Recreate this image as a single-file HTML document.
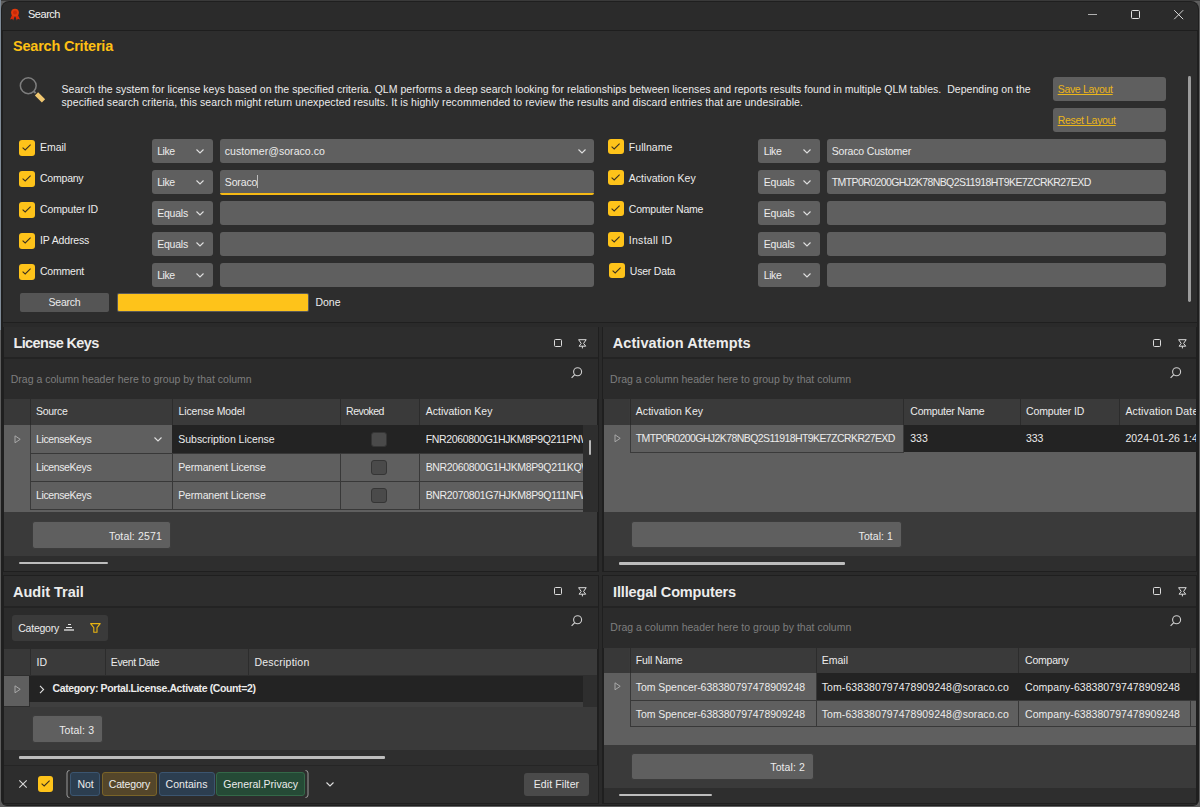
<!DOCTYPE html>
<html><head><meta charset="utf-8">
<style>
*{box-sizing:border-box;margin:0;padding:0}
html,body{width:1200px;height:807px;overflow:hidden;background:#5a5a5a}
body{font-family:"Liberation Sans",sans-serif;font-size:11px;color:#f0f0f0;position:relative}
.a{position:absolute}
.t{position:absolute;white-space:nowrap;line-height:1}
svg{position:absolute;overflow:visible}
</style></head><body>
<div class="a" style="left:0px;top:0px;width:1200px;height:807px;background:#5e5e5e;"></div>
<div class="a" style="left:0px;top:0px;width:1200px;height:1.2px;background:#3a3a3a;"></div>
<div class="a" style="left:0px;top:0px;width:1.2px;height:330px;background:#7f8b98;"></div>
<div class="a" style="left:1px;top:1px;width:1198px;height:805px;background:#1f1f1f;border-radius:8px 8px 6px 6px;"></div>
<div class="a" style="left:2px;top:2px;width:1196px;height:28px;background:#2b2b2b;border-radius:7px 7px 0 0;"></div>
<div class="a" style="left:2px;top:30px;width:1196px;height:1px;background:#1e1e1e;"></div>
<svg style="left:9px;top:8px" width="12" height="13" viewBox="0 0 12 13">
<path d="M3.2 6.5 L1 11.5 L3.3 10.8 L4.2 12.6 L6 7.5 Z" fill="#d82a0a"/>
<path d="M8.8 6.5 L11 11.5 L8.7 10.8 L7.8 12.6 L6 7.5 Z" fill="#d82a0a"/>
<circle cx="6" cy="4.6" r="3.9" fill="#e03a0c"/><circle cx="6" cy="4.6" r="2" fill="#c82808"/>
</svg>
<div class="t" style="top:8.69px;font-size:11px;color:#f2f2f2;letter-spacing:-0.476px;left:28px;">Search</div>
<div class="a" style="left:1088px;top:14px;width:9px;height:1.3px;background:#b0b0b0;"></div>
<div class="a" style="left:1131px;top:10px;width:9px;height:9px;border:1px solid #e0e0e0;border-radius:1.5px;"></div>
<svg style="left:1174px;top:10px" width="10" height="10" viewBox="0 0 10 10"><path d="M0.2 0.2 L9.2 9.2 M9.2 0.2 L0.2 9.2" stroke="#e0e0e0" stroke-width="0.95"/></svg>
<div class="a" style="left:3px;top:31px;width:1194px;height:291px;background:#2d2d2d;"></div>
<div class="t" style="top:38.73px;font-size:14.5px;color:#fec014;font-weight:bold;letter-spacing:-0.211px;left:13px;">Search Criteria</div>
<svg style="left:18px;top:76px" width="30" height="30" viewBox="0 0 30 30">
<circle cx="10.25" cy="9.75" r="7.9" fill="none" stroke="#7e7e7e" stroke-width="1.5"/>
<path d="M15.6 15.1 L17.6 17.1" stroke="#7e7e7e" stroke-width="2"/>
<path d="M20.1 16.2 L27.1 23.2 L23.9 26.4 L16.9 19.4 Z" fill="#f0c770"/>
</svg>
<div class="t" style="top:83.91px;font-size:10.5px;color:#ececec;letter-spacing:0.039px;left:61.5px;white-space:pre;">Search the system for license keys based on the specified criteria. QLM performs a deep search looking for relationships between licenses and reports results found in multiple QLM tables.  Depending on the</div>
<div class="t" style="top:96.81px;font-size:10.5px;color:#ececec;letter-spacing:0.097px;left:61.5px;">specified search criteria, this search might return unexpected results. It is highly recommended to review the results and discard entries that are undesirable.</div>
<div class="a" style="left:1053px;top:77px;width:113px;height:24px;background:#5f5f5f;border-radius:3px;"></div>
<div class="t" style="top:83.91px;font-size:10.5px;color:#eab51a;letter-spacing:-0.307px;left:1057.7px;text-decoration:underline;text-decoration-skip-ink:none;">Save Layout</div>
<div class="a" style="left:1053px;top:108px;width:113px;height:24px;background:#5f5f5f;border-radius:3px;"></div>
<div class="t" style="top:114.91px;font-size:10.5px;color:#eab51a;letter-spacing:-0.323px;left:1057.7px;text-decoration:underline;text-decoration-skip-ink:none;">Reset Layout</div>
<div class="a" style="left:1188px;top:75.5px;width:2.8px;height:226.5px;background:#9c9c9c;border-radius:1.4px;"></div>
<div class="a" style="left:19px;top:140px;width:15.5px;height:15.5px;background:#fec31a;border-radius:3px;"></div>
<svg style="left:19px;top:140px" width="16" height="16" viewBox="0 0 16 16"><path d="M3.6 7.6 L6.2 10 L11.6 4.6" fill="none" stroke="#3a3020" stroke-width="1.1"/></svg>
<div class="t" style="top:141.91px;font-size:10.5px;color:#ececec;letter-spacing:-0.051px;left:40px;">Email</div>
<div class="a" style="left:152px;top:139px;width:61px;height:24px;background:#5f5f5f;border-radius:3px;"></div>
<div class="t" style="top:146.11px;font-size:10.5px;color:#ececec;letter-spacing:-0.415px;left:157.2px;">Like</div>
<svg style="left:196px;top:149px" width="8" height="5" viewBox="0 0 8 5"><path d="M0.5 0.5 L4 4 L7.5 0.5" fill="none" stroke="#e0e0e0" stroke-width="1.1"/></svg>
<div class="a" style="left:219.5px;top:139px;width:374.8px;height:24px;background:#5f5f5f;border-radius:3px;"></div>
<div class="t" style="top:146.11px;font-size:10.5px;color:#ececec;letter-spacing:0.036px;left:224.8px;">customer@soraco.co</div>
<svg style="left:577.5px;top:149px" width="8" height="5" viewBox="0 0 8 5"><path d="M0.5 0.5 L4 4 L7.5 0.5" fill="none" stroke="#e0e0e0" stroke-width="1.1"/></svg>
<div class="a" style="left:19px;top:171px;width:15.5px;height:15.5px;background:#fec31a;border-radius:3px;"></div>
<svg style="left:19px;top:171px" width="16" height="16" viewBox="0 0 16 16"><path d="M3.6 7.6 L6.2 10 L11.6 4.6" fill="none" stroke="#3a3020" stroke-width="1.1"/></svg>
<div class="t" style="top:172.91px;font-size:10.5px;color:#ececec;letter-spacing:-0.220px;left:40px;">Company</div>
<div class="a" style="left:152px;top:170px;width:61px;height:24px;background:#5f5f5f;border-radius:3px;"></div>
<div class="t" style="top:177.11px;font-size:10.5px;color:#ececec;letter-spacing:-0.415px;left:157.2px;">Like</div>
<svg style="left:196px;top:180px" width="8" height="5" viewBox="0 0 8 5"><path d="M0.5 0.5 L4 4 L7.5 0.5" fill="none" stroke="#e0e0e0" stroke-width="1.1"/></svg>
<div class="a" style="left:219.5px;top:170px;width:374.8px;height:24px;background:#5f5f5f;border-radius:3px;"></div>
<div class="t" style="top:177.11px;font-size:10.5px;color:#ececec;letter-spacing:-0.145px;left:224.8px;">Soraco</div>
<div class="a" style="left:219.5px;top:192.8px;width:374.8px;height:2.2px;background:#f5b914;border-radius:0 0 2px 2px;"></div>
<div class="a" style="left:257.3px;top:175px;width:0.9px;height:12.8px;background:#bcbcbc;"></div>
<div class="a" style="left:19px;top:202px;width:15.5px;height:15.5px;background:#fec31a;border-radius:3px;"></div>
<svg style="left:19px;top:202px" width="16" height="16" viewBox="0 0 16 16"><path d="M3.6 7.6 L6.2 10 L11.6 4.6" fill="none" stroke="#3a3020" stroke-width="1.1"/></svg>
<div class="t" style="top:203.91px;font-size:10.5px;color:#ececec;letter-spacing:-0.138px;left:40px;">Computer ID</div>
<div class="a" style="left:152px;top:201px;width:61px;height:24px;background:#5f5f5f;border-radius:3px;"></div>
<div class="t" style="top:208.11px;font-size:10.5px;color:#ececec;letter-spacing:-0.217px;left:157.2px;">Equals</div>
<svg style="left:196px;top:211px" width="8" height="5" viewBox="0 0 8 5"><path d="M0.5 0.5 L4 4 L7.5 0.5" fill="none" stroke="#e0e0e0" stroke-width="1.1"/></svg>
<div class="a" style="left:219.5px;top:201px;width:374.8px;height:24px;background:#5f5f5f;border-radius:3px;"></div>
<div class="a" style="left:19px;top:233px;width:15.5px;height:15.5px;background:#fec31a;border-radius:3px;"></div>
<svg style="left:19px;top:233px" width="16" height="16" viewBox="0 0 16 16"><path d="M3.6 7.6 L6.2 10 L11.6 4.6" fill="none" stroke="#3a3020" stroke-width="1.1"/></svg>
<div class="t" style="top:234.91px;font-size:10.5px;color:#ececec;letter-spacing:-0.136px;left:40px;">IP Address</div>
<div class="a" style="left:152px;top:232px;width:61px;height:24px;background:#5f5f5f;border-radius:3px;"></div>
<div class="t" style="top:239.11px;font-size:10.5px;color:#ececec;letter-spacing:-0.217px;left:157.2px;">Equals</div>
<svg style="left:196px;top:242px" width="8" height="5" viewBox="0 0 8 5"><path d="M0.5 0.5 L4 4 L7.5 0.5" fill="none" stroke="#e0e0e0" stroke-width="1.1"/></svg>
<div class="a" style="left:219.5px;top:232px;width:374.8px;height:24px;background:#5f5f5f;border-radius:3px;"></div>
<div class="a" style="left:19px;top:264px;width:15.5px;height:15.5px;background:#fec31a;border-radius:3px;"></div>
<svg style="left:19px;top:264px" width="16" height="16" viewBox="0 0 16 16"><path d="M3.6 7.6 L6.2 10 L11.6 4.6" fill="none" stroke="#3a3020" stroke-width="1.1"/></svg>
<div class="t" style="top:265.91px;font-size:10.5px;color:#ececec;letter-spacing:-0.216px;left:40px;">Comment</div>
<div class="a" style="left:152px;top:263px;width:61px;height:24px;background:#5f5f5f;border-radius:3px;"></div>
<div class="t" style="top:270.11px;font-size:10.5px;color:#ececec;letter-spacing:-0.415px;left:157.2px;">Like</div>
<svg style="left:196px;top:273px" width="8" height="5" viewBox="0 0 8 5"><path d="M0.5 0.5 L4 4 L7.5 0.5" fill="none" stroke="#e0e0e0" stroke-width="1.1"/></svg>
<div class="a" style="left:219.5px;top:263px;width:374.8px;height:24px;background:#5f5f5f;border-radius:3px;"></div>
<div class="a" style="left:608px;top:138.8px;width:15.5px;height:15.5px;background:#fec31a;border-radius:3px;"></div>
<svg style="left:608px;top:138.8px" width="16" height="16" viewBox="0 0 16 16"><path d="M3.6 7.6 L6.2 10 L11.6 4.6" fill="none" stroke="#3a3020" stroke-width="1.1"/></svg>
<div class="t" style="top:141.61px;font-size:10.5px;color:#ececec;letter-spacing:0.071px;left:628.75px;">Fullname</div>
<div class="a" style="left:758px;top:139px;width:62px;height:24px;background:#5f5f5f;border-radius:3px;"></div>
<div class="t" style="top:146.11px;font-size:10.5px;color:#ececec;letter-spacing:-0.415px;left:763.75px;">Like</div>
<svg style="left:803px;top:149px" width="8" height="5" viewBox="0 0 8 5"><path d="M0.5 0.5 L4 4 L7.5 0.5" fill="none" stroke="#e0e0e0" stroke-width="1.1"/></svg>
<div class="a" style="left:827px;top:139px;width:339px;height:24px;background:#5f5f5f;border-radius:3px;"></div>
<div class="t" style="top:146.11px;font-size:10.5px;color:#ececec;letter-spacing:-0.160px;left:831.7px;">Soraco Customer</div>
<div class="a" style="left:608px;top:169.8px;width:15.5px;height:15.5px;background:#fec31a;border-radius:3px;"></div>
<svg style="left:608px;top:169.8px" width="16" height="16" viewBox="0 0 16 16"><path d="M3.6 7.6 L6.2 10 L11.6 4.6" fill="none" stroke="#3a3020" stroke-width="1.1"/></svg>
<div class="t" style="top:172.61px;font-size:10.5px;color:#ececec;letter-spacing:0.033px;left:628.75px;">Activation Key</div>
<div class="a" style="left:758px;top:170px;width:62px;height:24px;background:#5f5f5f;border-radius:3px;"></div>
<div class="t" style="top:177.11px;font-size:10.5px;color:#ececec;letter-spacing:-0.217px;left:763.75px;">Equals</div>
<svg style="left:803px;top:180px" width="8" height="5" viewBox="0 0 8 5"><path d="M0.5 0.5 L4 4 L7.5 0.5" fill="none" stroke="#e0e0e0" stroke-width="1.1"/></svg>
<div class="a" style="left:827px;top:170px;width:339px;height:24px;background:#5f5f5f;border-radius:3px;"></div>
<div class="t" style="top:177.11px;font-size:10.5px;color:#ececec;letter-spacing:-0.582px;left:831.7px;">TMTP0R0200GHJ2K78NBQ2S11918HT9KE7ZCRKR27EXD</div>
<div class="a" style="left:608px;top:200.8px;width:15.5px;height:15.5px;background:#fec31a;border-radius:3px;"></div>
<svg style="left:608px;top:200.8px" width="16" height="16" viewBox="0 0 16 16"><path d="M3.6 7.6 L6.2 10 L11.6 4.6" fill="none" stroke="#3a3020" stroke-width="1.1"/></svg>
<div class="t" style="top:203.61px;font-size:10.5px;color:#ececec;letter-spacing:-0.194px;left:628.75px;">Computer Name</div>
<div class="a" style="left:758px;top:201px;width:62px;height:24px;background:#5f5f5f;border-radius:3px;"></div>
<div class="t" style="top:208.11px;font-size:10.5px;color:#ececec;letter-spacing:-0.217px;left:763.75px;">Equals</div>
<svg style="left:803px;top:211px" width="8" height="5" viewBox="0 0 8 5"><path d="M0.5 0.5 L4 4 L7.5 0.5" fill="none" stroke="#e0e0e0" stroke-width="1.1"/></svg>
<div class="a" style="left:827px;top:201px;width:339px;height:24px;background:#5f5f5f;border-radius:3px;"></div>
<div class="a" style="left:608px;top:231.8px;width:15.5px;height:15.5px;background:#fec31a;border-radius:3px;"></div>
<svg style="left:608px;top:231.8px" width="16" height="16" viewBox="0 0 16 16"><path d="M3.6 7.6 L6.2 10 L11.6 4.6" fill="none" stroke="#3a3020" stroke-width="1.1"/></svg>
<div class="t" style="top:234.61px;font-size:10.5px;color:#ececec;letter-spacing:0.290px;left:628.75px;">Install ID</div>
<div class="a" style="left:758px;top:232px;width:62px;height:24px;background:#5f5f5f;border-radius:3px;"></div>
<div class="t" style="top:239.11px;font-size:10.5px;color:#ececec;letter-spacing:-0.217px;left:763.75px;">Equals</div>
<svg style="left:803px;top:242px" width="8" height="5" viewBox="0 0 8 5"><path d="M0.5 0.5 L4 4 L7.5 0.5" fill="none" stroke="#e0e0e0" stroke-width="1.1"/></svg>
<div class="a" style="left:827px;top:232px;width:339px;height:24px;background:#5f5f5f;border-radius:3px;"></div>
<div class="a" style="left:609px;top:262.8px;width:15.5px;height:15.5px;background:#fec31a;border-radius:3px;"></div>
<svg style="left:609px;top:262.8px" width="16" height="16" viewBox="0 0 16 16"><path d="M3.6 7.6 L6.2 10 L11.6 4.6" fill="none" stroke="#3a3020" stroke-width="1.1"/></svg>
<div class="t" style="top:265.61px;font-size:10.5px;color:#ececec;letter-spacing:-0.196px;left:629.75px;">User Data</div>
<div class="a" style="left:758px;top:263px;width:62px;height:24px;background:#5f5f5f;border-radius:3px;"></div>
<div class="t" style="top:270.11px;font-size:10.5px;color:#ececec;letter-spacing:-0.415px;left:763.75px;">Like</div>
<svg style="left:803px;top:273px" width="8" height="5" viewBox="0 0 8 5"><path d="M0.5 0.5 L4 4 L7.5 0.5" fill="none" stroke="#e0e0e0" stroke-width="1.1"/></svg>
<div class="a" style="left:827px;top:263px;width:339px;height:24px;background:#5f5f5f;border-radius:3px;"></div>
<div class="a" style="left:20px;top:293px;width:89px;height:19px;background:#555555;border-radius:2px;"></div>
<div class="t" style="top:297.11px;font-size:10.5px;color:#ececec;letter-spacing:-0.211px;left:48.50px;">Search</div>
<div class="a" style="left:117px;top:293px;width:192px;height:19px;background:#5a5a5a;border-radius:2px;"></div>
<div class="a" style="left:118px;top:294px;width:190px;height:17px;background:#fec31a;border-radius:1px;"></div>
<div class="t" style="top:297.11px;font-size:10.5px;color:#ececec;letter-spacing:-0.025px;left:315.5px;">Done</div>
<div class="a" style="left:3px;top:322px;width:1194px;height:483px;background:#2a2a2a;"></div>
<div class="a" style="left:3px;top:321.6px;width:1194px;height:1px;background:#1f1f1f;"></div>
<div class="a" style="left:3px;top:326.5px;width:595.5px;height:245.3px;background:#1f1f1f;"></div>
<div class="a" style="left:602.2px;top:326.5px;width:594.8px;height:245.3px;background:#1f1f1f;"></div>
<div class="a" style="left:3px;top:574.6px;width:595.8px;height:229.4px;background:#1f1f1f;"></div>
<div class="a" style="left:602.2px;top:574.6px;width:594.8px;height:229.4px;background:#1f1f1f;"></div>
<div class="a" style="left:4px;top:327px;width:593.5px;height:30px;background:#2d2d2d;"></div>
<div class="t" style="top:335.73px;font-size:14.5px;color:#ececec;font-weight:bold;letter-spacing:-0.616px;left:13.4px;">License Keys</div>
<div class="a" style="left:554px;top:338.5px;width:8.2px;height:8.2px;border:1px solid #dcdcdc;border-bottom-width:1.5px;border-radius:1.5px;"></div>
<svg style="left:578.3px;top:338.5px" width="9" height="9" viewBox="0 0 9 9"><path d="M0.6 0.7 H8.2 L5.6 4.4 L7.7 7.2 H1.1 L3.2 4.4 Z M4.4 7.2 V9.4" fill="none" stroke="#dedede" stroke-width="1"/></svg>
<div class="a" style="left:4px;top:357px;width:593.5px;height:1.5px;background:#232323;"></div>
<div class="a" style="left:4px;top:358.5px;width:593.5px;height:40px;background:#2b2b2b;"></div>
<div class="t" style="top:374.11px;font-size:10.5px;color:#7e7e7e;letter-spacing:0.011px;left:10.7px;">Drag a column header here to group by that column</div>
<svg style="left:571px;top:366.5px" width="12" height="12" viewBox="0 0 12 12"><circle cx="6.6" cy="4.8" r="4" fill="none" stroke="#cfcfcf" stroke-width="1.1"/><path d="M3.8 7.6 L0.6 10.8" stroke="#cfcfcf" stroke-width="1.2"/></svg>
<div class="a" style="left:4px;top:398.5px;width:593px;height:26px;background:#3a3a3a;"></div>
<div class="a" style="left:4px;top:398.5px;width:25.5px;height:26px;background:#383838;"></div>
<div class="a" style="left:29.5px;top:398.5px;width:1px;height:26px;background:#2c2c2c;"></div>
<div class="a" style="left:171.7px;top:398.5px;width:1px;height:26px;background:#2c2c2c;"></div>
<div class="a" style="left:339.5px;top:398.5px;width:1px;height:26px;background:#2c2c2c;"></div>
<div class="a" style="left:418.75px;top:398.5px;width:1px;height:26px;background:#2c2c2c;"></div>
<div class="t" style="top:406.41px;font-size:10.5px;color:#ececec;letter-spacing:-0.295px;left:36px;">Source</div>
<div class="t" style="top:406.41px;font-size:10.5px;color:#ececec;letter-spacing:-0.131px;left:178.6px;">License Model</div>
<div class="t" style="top:406.41px;font-size:10.5px;color:#ececec;letter-spacing:-0.534px;left:346.1px;">Revoked</div>
<div class="t" style="top:406.41px;font-size:10.5px;color:#ececec;letter-spacing:0.012px;left:425.7px;">Activation Key</div>
<div class="a" style="left:4px;top:424.5px;width:593px;height:87.5px;background:#5f5f5f;"></div>
<div class="a" style="left:583px;top:424.5px;width:14.5px;height:87.5px;background:#2e2e2e;"></div>
<div class="a" style="left:589px;top:440px;width:2.2px;height:14.5px;background:#b8b8b8;border-radius:1px;"></div>
<div class="a" style="left:4px;top:424.5px;width:25.5px;height:87.5px;background:#5f5f5f;"></div>
<div class="a" style="left:29.5px;top:424.5px;width:1px;height:87.5px;background:#3a3a3a;"></div>
<div class="a" style="left:172.2px;top:425px;width:410.8px;height:28px;background:#232323;"></div>
<div class="a" style="left:30px;top:453px;width:553px;height:1px;background:#383838;"></div>
<div class="a" style="left:30px;top:481px;width:553px;height:1px;background:#383838;"></div>
<div class="a" style="left:30px;top:509px;width:553px;height:1px;background:#383838;"></div>
<div class="a" style="left:171.7px;top:453px;width:1px;height:59px;background:#383838;"></div>
<div class="a" style="left:339.5px;top:453px;width:1px;height:59px;background:#383838;"></div>
<div class="a" style="left:418.75px;top:453px;width:1px;height:59px;background:#383838;"></div>
<svg style="left:13.5px;top:435px" width="8" height="9" viewBox="0 0 8 9"><path d="M1 0.8 L6.2 4.3 L1 7.8 Z" fill="none" stroke="#a8a8a8" stroke-width="1"/></svg>
<svg style="left:154px;top:437px" width="8" height="5" viewBox="0 0 8 5"><path d="M0.5 0.5 L4 4 L7.5 0.5" fill="none" stroke="#e0e0e0" stroke-width="1.1"/></svg>
<div class="t" style="top:434.11px;font-size:10.5px;color:#ececec;letter-spacing:-0.385px;left:36px;">LicenseKeys</div>
<div class="t" style="top:434.11px;font-size:10.5px;color:#ececec;letter-spacing:-0.032px;left:178.3px;">Subscription License</div>
<div class="a" style="left:371.2px;top:432px;width:15.5px;height:14.5px;background:#4a4a4a;border:1px solid #353535;border-radius:3px;"></div>
<div class="a" style="left:425.7px;top:431px;width:157.3px;height:16px;overflow:hidden">
<div class="t" style="top:3.11px;font-size:10.5px;color:#ececec;left:0px;letter-spacing:-0.35px;">FNR2060800G1HJKM8P9Q211PNWX4</div>
</div>
<div class="t" style="top:462.11px;font-size:10.5px;color:#ececec;letter-spacing:-0.385px;left:36px;">LicenseKeys</div>
<div class="t" style="top:462.11px;font-size:10.5px;color:#ececec;letter-spacing:-0.189px;left:178.3px;">Permanent License</div>
<div class="a" style="left:371.2px;top:460px;width:15.5px;height:14.5px;background:#4a4a4a;border:1px solid #353535;border-radius:3px;"></div>
<div class="a" style="left:425.7px;top:459px;width:157.3px;height:16px;overflow:hidden">
<div class="t" style="top:3.11px;font-size:10.5px;color:#ececec;left:0px;letter-spacing:-0.35px;">BNR2060800G1HJKM8P9Q211KQWX4</div>
</div>
<div class="t" style="top:490.11px;font-size:10.5px;color:#ececec;letter-spacing:-0.385px;left:36px;">LicenseKeys</div>
<div class="t" style="top:490.11px;font-size:10.5px;color:#ececec;letter-spacing:-0.189px;left:178.3px;">Permanent License</div>
<div class="a" style="left:371.2px;top:488px;width:15.5px;height:14.5px;background:#4a4a4a;border:1px solid #353535;border-radius:3px;"></div>
<div class="a" style="left:425.7px;top:487px;width:157.3px;height:16px;overflow:hidden">
<div class="t" style="top:3.11px;font-size:10.5px;color:#ececec;left:0px;letter-spacing:-0.35px;">BNR2070801G7HJKM8P9Q111NFWX4</div>
</div>
<div class="a" style="left:30px;top:509px;width:553px;height:3px;background:#5f5f5f;"></div>
<div class="a" style="left:30px;top:509px;width:553px;height:1px;background:#383838;"></div>
<div class="a" style="left:4px;top:512px;width:593px;height:1px;background:#2f2f2f;"></div>
<div class="a" style="left:4px;top:512px;width:593px;height:44px;background:#3a3a3a;"></div>
<div class="a" style="left:32px;top:521px;width:139px;height:27.5px;background:#5f5f5f;border-radius:3px;border:1px solid #3c3c3c;"></div>
<div class="t" style="top:530.61px;font-size:10.5px;color:#ececec;letter-spacing:0.139px;left:109.0px;">Total: 2571</div>
<div class="a" style="left:4px;top:556px;width:593px;height:14.5px;background:#2e2e2e;"></div>
<div class="a" style="left:19px;top:562px;width:89px;height:2.4px;background:#bdbdbd;border-radius:1px;"></div>
<div class="a" style="left:603.2px;top:327px;width:592.8px;height:30px;background:#2d2d2d;"></div>
<div class="t" style="top:336.13px;font-size:14.5px;color:#ececec;font-weight:bold;letter-spacing:0.086px;left:612.7px;">Activation Attempts</div>
<div class="a" style="left:1153.2px;top:338.5px;width:8.2px;height:8.2px;border:1px solid #dcdcdc;border-bottom-width:1.5px;border-radius:1.5px;"></div>
<svg style="left:1177.5px;top:338.5px" width="9" height="9" viewBox="0 0 9 9"><path d="M0.6 0.7 H8.2 L5.6 4.4 L7.7 7.2 H1.1 L3.2 4.4 Z M4.4 7.2 V9.4" fill="none" stroke="#dedede" stroke-width="1"/></svg>
<div class="a" style="left:603.2px;top:357px;width:592.8px;height:1.5px;background:#232323;"></div>
<div class="a" style="left:603.2px;top:358.5px;width:592.8px;height:40px;background:#2b2b2b;"></div>
<div class="t" style="top:373.91px;font-size:10.5px;color:#7e7e7e;letter-spacing:0.011px;left:610.1px;">Drag a column header here to group by that column</div>
<svg style="left:1170.2px;top:366.5px" width="12" height="12" viewBox="0 0 12 12"><circle cx="6.6" cy="4.8" r="4" fill="none" stroke="#cfcfcf" stroke-width="1.1"/><path d="M3.8 7.6 L0.6 10.8" stroke="#cfcfcf" stroke-width="1.2"/></svg>
<div class="a" style="left:603.7px;top:398.5px;width:592.3px;height:26px;background:#3a3a3a;"></div>
<div class="a" style="left:603.7px;top:398.5px;width:25.8px;height:26px;background:#383838;"></div>
<div class="a" style="left:629.5px;top:398.5px;width:1px;height:26px;background:#2c2c2c;"></div>
<div class="a" style="left:902.9px;top:398.5px;width:1px;height:26px;background:#2c2c2c;"></div>
<div class="a" style="left:1019.5px;top:398.5px;width:1px;height:26px;background:#2c2c2c;"></div>
<div class="a" style="left:1118.8px;top:398.5px;width:1px;height:26px;background:#2c2c2c;"></div>
<div class="t" style="top:405.91px;font-size:10.5px;color:#ececec;letter-spacing:0.062px;left:635.75px;">Activation Key</div>
<div class="t" style="top:405.91px;font-size:10.5px;color:#ececec;letter-spacing:-0.225px;left:910.3px;">Computer Name</div>
<div class="t" style="top:405.91px;font-size:10.5px;color:#ececec;letter-spacing:-0.111px;left:1026px;">Computer ID</div>
<div class="a" style="left:1125.4px;top:400px;width:70.6px;height:20px;overflow:hidden">
<div class="t" style="top:5.91px;font-size:10.5px;color:#ececec;letter-spacing:0.159px;left:0px;">Activation Date</div>
</div>
<div class="a" style="left:603.7px;top:424.5px;width:592.3px;height:87.5px;background:#5f5f5f;"></div>
<div class="a" style="left:903.4px;top:424.5px;width:292.6px;height:27.5px;background:#232323;"></div>
<div class="a" style="left:629.5px;top:424.5px;width:1px;height:27.5px;background:#3a3a3a;"></div>
<div class="a" style="left:629.5px;top:451.5px;width:274px;height:1px;background:#3a3a3a;"></div>
<div class="a" style="left:902.9px;top:424.5px;width:1px;height:27.5px;background:#3a3a3a;"></div>
<svg style="left:613.5px;top:434px" width="8" height="9" viewBox="0 0 8 9"><path d="M1 0.8 L6.2 4.3 L1 7.8 Z" fill="none" stroke="#a8a8a8" stroke-width="1"/></svg>
<div class="t" style="top:432.81px;font-size:10.5px;color:#ececec;letter-spacing:-0.582px;left:635.75px;">TMTP0R0200GHJ2K78NBQ2S11918HT9KE7ZCRKR27EXD</div>
<div class="t" style="top:432.81px;font-size:10.5px;color:#ececec;letter-spacing:-0.040px;left:910.3px;">333</div>
<div class="t" style="top:432.81px;font-size:10.5px;color:#ececec;letter-spacing:-0.040px;left:1026px;">333</div>
<div class="a" style="left:1125.4px;top:426px;width:70.6px;height:20px;overflow:hidden">
<div class="t" style="top:6.81px;font-size:10.5px;color:#ececec;letter-spacing:0.093px;left:0px;">2024-01-26 1:45 PM</div>
</div>
<div class="a" style="left:603.7px;top:512px;width:592.3px;height:44px;background:#3a3a3a;"></div>
<div class="a" style="left:631.4px;top:521.4px;width:270.7px;height:26.5px;background:#5f5f5f;border-radius:3px;border:1px solid #3c3c3c;"></div>
<div class="t" style="top:530.61px;font-size:10.5px;color:#ececec;letter-spacing:0.068px;left:858.6px;">Total: 1</div>
<div class="a" style="left:603.7px;top:556px;width:592.3px;height:14.5px;background:#2e2e2e;"></div>
<div class="a" style="left:618.5px;top:562.3px;width:226.3px;height:2.4px;background:#bdbdbd;border-radius:1px;"></div>
<div class="a" style="left:4px;top:575.6px;width:593.8px;height:30.4px;background:#2d2d2d;"></div>
<div class="t" style="top:584.73px;font-size:14.5px;color:#ececec;font-weight:bold;letter-spacing:-0.013px;left:13px;">Audit Trail</div>
<div class="a" style="left:554px;top:587px;width:8.2px;height:8.2px;border:1px solid #dcdcdc;border-bottom-width:1.5px;border-radius:1.5px;"></div>
<svg style="left:578.3px;top:587px" width="9" height="9" viewBox="0 0 9 9"><path d="M0.6 0.7 H8.2 L5.6 4.4 L7.7 7.2 H1.1 L3.2 4.4 Z M4.4 7.2 V9.4" fill="none" stroke="#dedede" stroke-width="1"/></svg>
<div class="a" style="left:4px;top:606px;width:593.8px;height:1.5px;background:#232323;"></div>
<div class="a" style="left:4px;top:607.5px;width:593.8px;height:41.5px;background:#2b2b2b;"></div>
<div class="a" style="left:12px;top:615px;width:96px;height:25.8px;background:#3a3a3a;border-radius:3px;"></div>
<div class="t" style="top:623.11px;font-size:10.5px;color:#ececec;letter-spacing:-0.232px;left:18.25px;">Category</div>
<div class="a" style="left:67.5px;top:624px;width:3.2px;height:1.2px;background:#e8e8e8;"></div>
<div class="a" style="left:65.8px;top:627px;width:6.6px;height:1.2px;background:#e8e8e8;"></div>
<div class="a" style="left:63.8px;top:629.4px;width:10.4px;height:1.4px;background:#a8a8a8;"></div>
<svg style="left:89.5px;top:622.5px" width="11" height="10" viewBox="0 0 11 10"><path d="M0.6 0.6 H10.2 L7 4.6 V9.3 H3.8 V4.6 Z" fill="none" stroke="#e8b412" stroke-width="1.1" stroke-linejoin="round"/></svg>
<svg style="left:571px;top:615px" width="12" height="12" viewBox="0 0 12 12"><circle cx="6.6" cy="4.8" r="4" fill="none" stroke="#cfcfcf" stroke-width="1.1"/><path d="M3.8 7.6 L0.6 10.8" stroke="#cfcfcf" stroke-width="1.2"/></svg>
<div class="a" style="left:4px;top:649.2px;width:593px;height:25.8px;background:#3a3a3a;"></div>
<div class="a" style="left:4px;top:649.2px;width:25.5px;height:25.8px;background:#383838;"></div>
<div class="a" style="left:29.5px;top:649.2px;width:1px;height:25.8px;background:#2c2c2c;"></div>
<div class="a" style="left:104.5px;top:649.2px;width:1px;height:25.8px;background:#2c2c2c;"></div>
<div class="a" style="left:248.25px;top:649.2px;width:1px;height:25.8px;background:#2c2c2c;"></div>
<div class="t" style="top:657.36px;font-size:10.5px;color:#ececec;left:36.5px;">ID</div>
<div class="t" style="top:657.36px;font-size:10.5px;color:#ececec;letter-spacing:-0.345px;left:110.75px;">Event Date</div>
<div class="t" style="top:657.36px;font-size:10.5px;color:#ececec;letter-spacing:0.225px;left:254.5px;">Description</div>
<div class="a" style="left:4px;top:675px;width:593px;height:32px;background:#2e2e2e;"></div>
<div class="a" style="left:4px;top:675.8px;width:25px;height:30.6px;background:#5f5f5f;"></div>
<div class="a" style="left:29px;top:675.8px;width:553.5px;height:26px;background:#232323;"></div>
<div class="a" style="left:29.5px;top:702px;width:553px;height:4.5px;background:#3f3f3f;"></div>
<svg style="left:13.5px;top:684.5px" width="8" height="9" viewBox="0 0 8 9"><path d="M1 0.8 L6.2 4.3 L1 7.8 Z" fill="none" stroke="#a8a8a8" stroke-width="1"/></svg>
<svg style="left:38.5px;top:685px" width="6" height="9" viewBox="0 0 6 9"><path d="M1 0.8 L4.6 4.5 L1 8.2" fill="none" stroke="#e0e0e0" stroke-width="1.1"/></svg>
<div class="t" style="top:683.21px;font-size:10.5px;color:#ececec;font-weight:bold;letter-spacing:-0.388px;left:52.5px;">Category: Portal.License.Activate (Count=2)</div>
<div class="a" style="left:4px;top:707px;width:593px;height:43px;background:#3a3a3a;"></div>
<div class="a" style="left:32px;top:715px;width:71px;height:28px;background:#5f5f5f;border-radius:3px;border:1px solid #3c3c3c;"></div>
<div class="t" style="top:724.61px;font-size:10.5px;color:#ececec;letter-spacing:0.143px;left:59.2px;">Total: 3</div>
<div class="a" style="left:4px;top:750px;width:593px;height:15px;background:#2e2e2e;"></div>
<div class="a" style="left:19px;top:756px;width:365.6px;height:2.6px;background:#bdbdbd;border-radius:1px;"></div>
<div class="a" style="left:4px;top:765px;width:593.8px;height:1px;background:#252525;"></div>
<div class="a" style="left:4px;top:766px;width:593.8px;height:37px;background:#2d2d2d;"></div>
<svg style="left:19.3px;top:780px" width="8" height="8" viewBox="0 0 8 8"><path d="M0.3 0.3 L7.7 7.7 M7.7 0.3 L0.3 7.7" stroke="#d8d8d8" stroke-width="1.1"/></svg>
<div class="a" style="left:37.8px;top:776px;width:15.5px;height:15.5px;background:#fec31a;border-radius:3px;"></div>
<svg style="left:37.8px;top:776px" width="16" height="16" viewBox="0 0 16 16"><path d="M3.6 7.6 L6.2 10 L11.6 4.6" fill="none" stroke="#3a3020" stroke-width="1.1"/></svg>
<svg style="left:66px;top:770px" width="4" height="28" viewBox="0 0 4 28"><path d="M3.5 0.5 Q1 0.5 1 3 V25 Q1 27.5 3.5 27.5" fill="none" stroke="#9a9a9a" stroke-width="1"/></svg>
<svg style="left:305px;top:770px" width="4" height="28" viewBox="0 0 4 28"><path d="M0.5 0.5 Q3 0.5 3 3 V25 Q3 27.5 0.5 27.5" fill="none" stroke="#9a9a9a" stroke-width="1"/></svg>
<div class="a" style="left:70px;top:771.7px;width:30.299999999999997px;height:24.1px;background:#2c3e50;border:1px solid #3b5570;border-radius:3px;"></div>
<div class="t" style="top:778.61px;font-size:10.5px;color:#ececec;letter-spacing:-0.047px;left:77.5px;">Not</div>
<div class="a" style="left:102px;top:771.7px;width:55px;height:24.1px;background:#54462a;border:1px solid #7a6428;border-radius:3px;"></div>
<div class="t" style="top:778.61px;font-size:10.5px;color:#ececec;letter-spacing:-0.176px;left:108.8px;">Category</div>
<div class="a" style="left:158.7px;top:771.7px;width:56.0px;height:24.1px;background:#2c3e50;border:1px solid #3b5570;border-radius:3px;"></div>
<div class="t" style="top:778.61px;font-size:10.5px;color:#ececec;letter-spacing:0.070px;left:165.5px;">Contains</div>
<div class="a" style="left:216.2px;top:771.7px;width:88.80000000000001px;height:24.1px;background:#254a36;border:1px solid #336848;border-radius:3px;"></div>
<div class="t" style="top:778.61px;font-size:10.5px;color:#ececec;letter-spacing:0.000px;left:223.3px;">General.Privacy</div>
<svg style="left:326px;top:782px" width="8" height="5" viewBox="0 0 8 5"><path d="M0.5 0.5 L4 4 L7.5 0.5" fill="none" stroke="#e0e0e0" stroke-width="1.1"/></svg>
<div class="a" style="left:524.2px;top:772.8px;width:65px;height:23px;background:#4a4a4a;border-radius:3px;"></div>
<div class="t" style="top:778.61px;font-size:10.5px;color:#ececec;letter-spacing:0.105px;left:533.7px;">Edit Filter</div>
<div class="a" style="left:603.2px;top:575.6px;width:592.8px;height:30.4px;background:#2d2d2d;"></div>
<div class="t" style="top:585.03px;font-size:14.5px;color:#ececec;font-weight:bold;letter-spacing:-0.150px;left:613px;">Illlegal Computers</div>
<div class="a" style="left:1153.2px;top:587px;width:8.2px;height:8.2px;border:1px solid #dcdcdc;border-bottom-width:1.5px;border-radius:1.5px;"></div>
<svg style="left:1177.5px;top:587px" width="9" height="9" viewBox="0 0 9 9"><path d="M0.6 0.7 H8.2 L5.6 4.4 L7.7 7.2 H1.1 L3.2 4.4 Z M4.4 7.2 V9.4" fill="none" stroke="#dedede" stroke-width="1"/></svg>
<div class="a" style="left:603.2px;top:606px;width:592.8px;height:1.5px;background:#232323;"></div>
<div class="a" style="left:603.2px;top:607.5px;width:592.8px;height:40.3px;background:#2b2b2b;"></div>
<div class="t" style="top:622.11px;font-size:10.5px;color:#7e7e7e;letter-spacing:0.011px;left:610.3px;">Drag a column header here to group by that column</div>
<svg style="left:1170.2px;top:615px" width="12" height="12" viewBox="0 0 12 12"><circle cx="6.6" cy="4.8" r="4" fill="none" stroke="#cfcfcf" stroke-width="1.1"/><path d="M3.8 7.6 L0.6 10.8" stroke="#cfcfcf" stroke-width="1.2"/></svg>
<div class="a" style="left:603.7px;top:647.8px;width:592.3px;height:25.5px;background:#3a3a3a;"></div>
<div class="a" style="left:603.7px;top:647.8px;width:25.8px;height:25.5px;background:#383838;"></div>
<div class="a" style="left:629.5px;top:647.8px;width:1px;height:25.5px;background:#2c2c2c;"></div>
<div class="a" style="left:815.5px;top:647.8px;width:1px;height:25.5px;background:#2c2c2c;"></div>
<div class="a" style="left:1018.3px;top:647.8px;width:1px;height:25.5px;background:#2c2c2c;"></div>
<div class="a" style="left:1189.5px;top:647.8px;width:1px;height:25.5px;background:#2c2c2c;"></div>
<div class="t" style="top:655.11px;font-size:10.5px;color:#ececec;letter-spacing:-0.122px;left:635.75px;">Full Name</div>
<div class="t" style="top:655.11px;font-size:10.5px;color:#ececec;letter-spacing:-0.001px;left:821.75px;">Email</div>
<div class="t" style="top:655.11px;font-size:10.5px;color:#ececec;letter-spacing:-0.205px;left:1025px;">Company</div>
<div class="a" style="left:603.7px;top:673.3px;width:592.3px;height:71.5px;background:#5f5f5f;"></div>
<div class="a" style="left:816px;top:673.3px;width:380px;height:26.7px;background:#232323;"></div>
<div class="a" style="left:629.5px;top:700px;width:566.5px;height:1px;background:#383838;"></div>
<div class="a" style="left:629.5px;top:726.2px;width:566.5px;height:1px;background:#383838;"></div>
<div class="a" style="left:629.5px;top:673.3px;width:1px;height:53.5px;background:#383838;"></div>
<div class="a" style="left:815.5px;top:673.3px;width:1px;height:26.7px;background:#383838;"></div>
<div class="a" style="left:815.5px;top:700px;width:1px;height:26.8px;background:#383838;"></div>
<div class="a" style="left:1018.3px;top:700px;width:1px;height:26.8px;background:#383838;"></div>
<div class="a" style="left:1189.5px;top:700px;width:1px;height:26.8px;background:#383838;"></div>
<svg style="left:613.5px;top:682px" width="8" height="9" viewBox="0 0 8 9"><path d="M1 0.8 L6.2 4.3 L1 7.8 Z" fill="none" stroke="#a8a8a8" stroke-width="1"/></svg>
<div class="t" style="top:681.86px;font-size:10.5px;color:#ececec;letter-spacing:-0.041px;left:635.75px;">Tom Spencer-638380797478909248</div>
<div class="t" style="top:681.86px;font-size:10.5px;color:#ececec;letter-spacing:0.077px;left:821.75px;">Tom-638380797478909248@soraco.co</div>
<div class="t" style="top:681.86px;font-size:10.5px;color:#ececec;letter-spacing:0.056px;left:1025px;">Company-638380797478909248</div>
<div class="t" style="top:708.61px;font-size:10.5px;color:#ececec;letter-spacing:-0.041px;left:635.75px;">Tom Spencer-638380797478909248</div>
<div class="t" style="top:708.61px;font-size:10.5px;color:#ececec;letter-spacing:0.077px;left:821.75px;">Tom-638380797478909248@soraco.co</div>
<div class="t" style="top:708.61px;font-size:10.5px;color:#ececec;letter-spacing:0.056px;left:1025px;">Company-638380797478909248</div>
<div class="a" style="left:603.7px;top:744.8px;width:592.3px;height:43.2px;background:#3a3a3a;"></div>
<div class="a" style="left:631px;top:752.6px;width:183.3px;height:27.9px;background:#5f5f5f;border-radius:3px;border:1px solid #3c3c3c;"></div>
<div class="t" style="top:762.11px;font-size:10.5px;color:#ececec;letter-spacing:0.106px;left:770.3px;">Total: 2</div>
<div class="a" style="left:603.7px;top:788px;width:592.3px;height:15px;background:#2e2e2e;"></div>
<div class="a" style="left:618.5px;top:793.8px;width:93.4px;height:2.6px;background:#bdbdbd;border-radius:1px;"></div>
</body></html>
